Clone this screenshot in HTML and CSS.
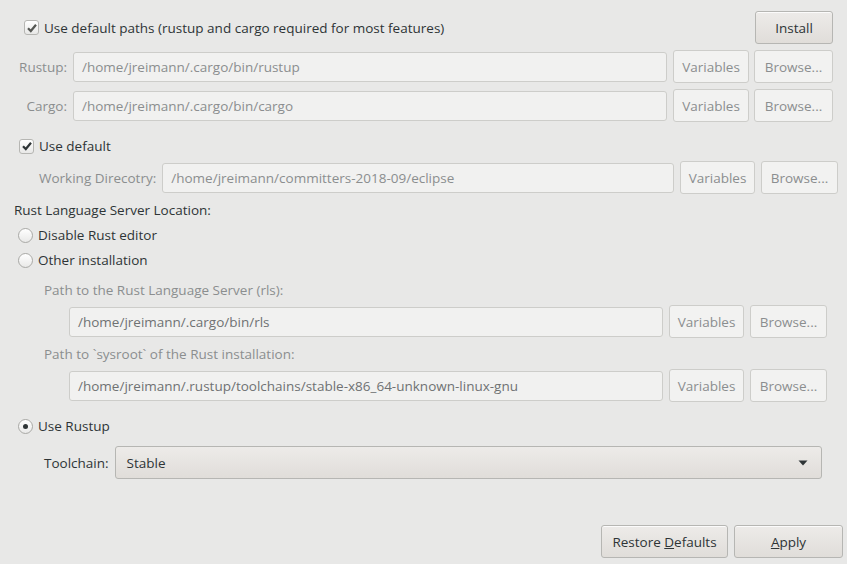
FILE: index.html
```html
<!DOCTYPE html>
<html lang="en">
<head>
    <meta charset="UTF-8">
    <meta name="viewport" content="width=device-width, initial-scale=1.0">
    <title>Rust</title>
    <link rel="stylesheet" href="styles.css">
</head>
<body>

    <!-- Toolchain paths -->
    <div class="paths">
        <label class="check check-top">
            <span class="box checked">
                <svg width="12" height="12" viewBox="0 0 12 12"><path d="M2 6.2 L4.8 9 L10 2.8" fill="none" stroke="#555753" stroke-width="2.2"/></svg>
            </span>
            Use default paths (rustup and cargo required for most features)
        </label>
        <div class="btn install">Install</div>

        <div class="field-label">Rustup:</div>
        <div class="input">/home/jreimann/.cargo/bin/rustup</div>
        <div class="btn disabled">Variables</div>
        <div class="btn disabled">Browse...</div>

        <div class="field-label">Cargo:</div>
        <div class="input">/home/jreimann/.cargo/bin/cargo</div>
        <div class="btn disabled">Variables</div>
        <div class="btn disabled">Browse...</div>
    </div>

    <!-- Working directory -->
    <label class="check check-default">
        <span class="box checked">
            <svg width="12" height="12" viewBox="0 0 12 12"><path d="M2 6.2 L4.8 9 L10 2.8" fill="none" stroke="#2e3436" stroke-width="2.2"/></svg>
        </span>
        Use default
    </label>
    <div class="row workdir">
        <div class="field-label">Working Direcotry:</div>
        <div class="input">/home/jreimann/committers-2018-09/eclipse</div>
        <div class="btn disabled">Variables</div>
        <div class="btn disabled">Browse...</div>
    </div>

    <!-- Language server -->
    <div class="section-title">Rust Language Server Location:</div>
    <label class="radio radio-first"><span class="circle"></span>Disable Rust editor</label>
    <label class="radio"><span class="circle"></span>Other installation</label>

    <div class="sub-label first">Path to the Rust Language Server (rls):</div>
    <div class="row sub-row">
        <div class="input dark">/home/jreimann/.cargo/bin/rls</div>
        <div class="btn disabled">Variables</div>
        <div class="btn disabled">Browse...</div>
    </div>
    <div class="sub-label">Path to `sysroot` of the Rust installation:</div>
    <div class="row sub-row">
        <div class="input dark">/home/jreimann/.rustup/toolchains/stable-x86_64-unknown-linux-gnu</div>
        <div class="btn disabled">Variables</div>
        <div class="btn disabled">Browse...</div>
    </div>

    <label class="radio radio-rustup"><span class="circle on"></span>Use Rustup</label>
    <div class="row toolchain">
        <div class="toolchain-label">Toolchain:</div>
        <div class="combo">
            <span>Stable</span>
            <svg width="10" height="6" viewBox="0 0 10 6"><path d="M0.5 0.5 L9.5 0.5 L5 5.5 Z" fill="#2e3436"/></svg>
        </div>
    </div>

    <!-- Footer buttons -->
    <div class="footer">
        <div class="btn restore"><span>Restore <u>D</u>efaults</span></div>
        <div class="btn apply"><span><u>A</u>pply</span></div>
    </div>

</body>
</html>
```

FILE: styles.css
```css
/* General body styling */
body {
    font-family: "Open Sans", "Noto Sans", sans-serif;
    font-size: 13.5px;
    margin: 0;
    padding: 11px 0 0 0;
    background-color: #e8e8e7;
    color: #2e3436;
    width: 847px;
    height: 564px;
    overflow: hidden;
}

/* Buttons */
.btn {
    box-sizing: border-box;
    height: 33px;
    display: flex;
    align-items: center;
    justify-content: center;
    border: 1px solid #b6b6b3;
    border-radius: 3px;
    background: linear-gradient(#edebe9, #e0ddd9);
    box-shadow: inset 0 1px rgba(255, 255, 255, 0.8);
    color: #2e3436;
}
.btn.disabled {
    width: 75px;
    background: #f2f2f1;
    border-color: #cdcdca;
    box-shadow: none;
    color: #8b8e8f;
}
.btn.disabled + .btn.disabled {
    width: 77px;
}

/* Text inputs */
.input {
    box-sizing: border-box;
    height: 30px;
    flex: 1;
    display: flex;
    align-items: center;
    padding-left: 8px;
    background: #f1f1f0;
    border: 1px solid #cdcdca;
    border-radius: 3px;
    color: #8b8e8f;
    white-space: nowrap;
    overflow: hidden;
}
.input.dark {
    color: #6f7273;
}

.field-label {
    color: #8b8e8f;
    justify-self: end;
    white-space: nowrap;
}

/* Top grid: default paths */
.paths {
    display: grid;
    grid-template-columns: 53px 1fr 76px 78px;
    grid-auto-rows: 33px;
    column-gap: 6px;
    row-gap: 6px;
    align-items: center;
    padding: 0 14px;
}
.paths .btn.disabled + .btn.disabled {
    width: auto;
    margin-left: -1px;
}
.paths .btn.disabled {
    width: auto;
}
.check-top {
    grid-column: 1 / 4;
    margin-left: 10px;
}
.install {
    grid-column: 4;
}

/* Checkbox and radio */
.check, .radio {
    display: flex;
    align-items: center;
    gap: 5px;
    height: 24px;
}
.box {
    box-sizing: border-box;
    width: 15px;
    height: 15px;
    border: 1px solid #b6b6b3;
    border-radius: 3px;
    background: linear-gradient(#ffffff, #e8e8e7);
    display: flex;
    align-items: center;
    justify-content: center;
}
.check-default {
    margin-top: 12px;
    padding-left: 19px;
}

.circle {
    box-sizing: border-box;
    width: 15px;
    height: 15px;
    border: 1px solid #a9a9a6;
    border-radius: 50%;
    background: linear-gradient(#ffffff, #e9e9e8);
    display: flex;
    align-items: center;
    justify-content: center;
}
.circle.on::after {
    content: "";
    width: 5px;
    height: 5px;
    border-radius: 50%;
    background: #2e3436;
}
.radio {
    padding-left: 18px;
    margin-top: 1px;
}
.radio-first {
    margin-top: 3px;
}
.radio-rustup {
    margin-top: 12px;
}

/* Rows */
.row {
    display: flex;
    align-items: center;
    gap: 6px;
    height: 33px;
}
.workdir {
    margin-top: 3px;
    padding: 0 9px 0 39px;
}
.sub-row {
    margin-top: 5px;
    padding: 0 20px 0 69px;
}

.section-title {
    padding-left: 14px;
    margin-top: 6px;
    height: 20px;
    line-height: 20px;
}
.sub-label {
    padding-left: 44px;
    margin-top: 6px;
    height: 20px;
    line-height: 20px;
    color: #8b8e8f;
}
.sub-label.first {
    margin-top: 8px;
}

/* Toolchain combo */
.toolchain {
    margin-top: 8px;
    padding: 0 25px 0 44px;
}
.combo {
    box-sizing: border-box;
    flex: 1;
    height: 33px;
    display: flex;
    align-items: center;
    justify-content: space-between;
    padding: 0 13px 0 11px;
    border: 1px solid #b6b6b3;
    border-radius: 3px;
    background: linear-gradient(#edebe9, #e0ddd9);
}

/* Footer */
.footer {
    display: flex;
    justify-content: flex-end;
    gap: 6px;
    margin-top: 46px;
    padding-right: 4px;
}
.restore {
    width: 127px;
}
.apply {
    width: 109px;
}
```
